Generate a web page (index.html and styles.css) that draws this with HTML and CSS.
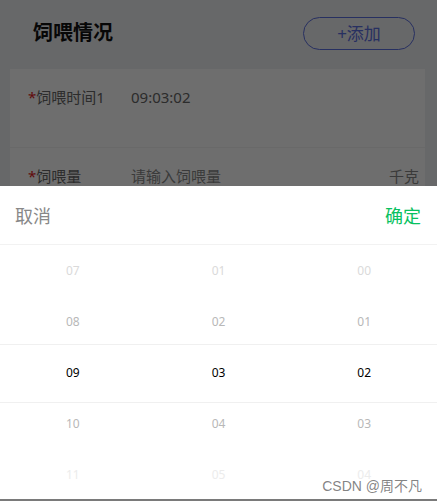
FILE: index.html
```html
<!DOCTYPE html>
<html lang="zh-CN">
<head>
    <meta charset="UTF-8">
    <meta name="viewport" content="width=device-width, initial-scale=1.0">
    <title>饲喂情况</title>
    <link rel="stylesheet" href="styles.css">
</head>
<body>
    <div class="page">
        <div class="section-head">
            <h2 class="section-title">饲喂情况</h2>
            <button class="add-btn">+添加</button>
        </div>

        <div class="feed-card">
            <div class="form-row">
                <span class="form-label"><i class="required">*</i>饲喂时间1</span>
                <span class="form-value">09:03:02</span>
            </div>
            <div class="form-row">
                <span class="form-label"><i class="required">*</i>饲喂量</span>
                <span class="form-value placeholder">请输入饲喂量</span>
                <span class="form-unit">千克</span>
            </div>
        </div>
    </div>

    <!-- time picker popup -->
    <div class="mask"></div>
    <div class="picker">
        <div class="picker-head">
            <span class="picker-cancel">取消</span>
            <span class="picker-confirm">确定</span>
        </div>
        <div class="picker-body">
            <div class="picker-indicator"></div>
            <div class="picker-col">
                <div class="picker-item far">07</div>
                <div class="picker-item near">08</div>
                <div class="picker-item active">09</div>
                <div class="picker-item near">10</div>
                <div class="picker-item farthest">11</div>
            </div>
            <div class="picker-col">
                <div class="picker-item far">01</div>
                <div class="picker-item near">02</div>
                <div class="picker-item active">03</div>
                <div class="picker-item near">04</div>
                <div class="picker-item farthest">05</div>
            </div>
            <div class="picker-col">
                <div class="picker-item far">00</div>
                <div class="picker-item near">01</div>
                <div class="picker-item active">02</div>
                <div class="picker-item near">03</div>
                <div class="picker-item farthest">04</div>
            </div>
        </div>
    </div>

    <div class="watermark">CSDN @周不凡</div>
</body>
</html>
```

FILE: styles.css
```css
* {
    margin: 0;
    padding: 0;
    box-sizing: border-box;
}

body {
    font-family: 'Noto Sans', 'Noto Sans CJK SC', sans-serif;
    width: 437px;
    height: 501px;
    overflow: hidden;
    position: relative;
    background: #eff0f4;
}

.page {
    height: 100%;
}

.section-head {
    display: flex;
    align-items: center;
    justify-content: space-between;
    padding: 16px 22px 0 33px;
}

.section-title {
    font-size: 20px;
    font-weight: bold;
    color: #111;
    line-height: 34px;
}

.add-btn {
    width: 112px;
    height: 33px;
    border: 1px solid #5b6fe0;
    border-radius: 17px;
    background: transparent;
    color: #5b6fe0;
    font-family: inherit;
    font-size: 17px;
    line-height: 31px;
}

.feed-card {
    margin: 19px 12px 0 10px;
    background: #fff;
}

.form-row {
    display: flex;
    align-items: flex-start;
    height: 79px;
    padding: 18px 6px 0 18px;
    font-size: 15px;
    line-height: 21px;
    color: #666;
    border-bottom: 1px solid #f3f3f3;
}

.form-label {
    width: 103px;
    flex-shrink: 0;
}

.required {
    color: #e02020;
    font-style: normal;
}

.form-value {
    flex: 1;
}

.placeholder {
    color: #888;
}

.form-unit {
    color: #888;
}

.mask {
    position: absolute;
    inset: 0;
    background: rgba(0, 0, 0, 0.57);
}

.picker {
    position: absolute;
    left: 0;
    right: 0;
    bottom: 0;
    height: 315px;
    background: #fff;
    border-bottom: 2px solid #7a7a7a;
    display: flex;
    flex-direction: column;
}

.picker-head {
    display: flex;
    justify-content: space-between;
    align-items: center;
    height: 59px;
    padding: 0 16px 0 15px;
    font-size: 18px;
    border-bottom: 1px solid #f2f2f2;
}

.picker-cancel {
    color: #888;
}

.picker-confirm {
    color: #07c160;
}

.picker-body {
    flex: 1;
    display: flex;
    position: relative;
    overflow: hidden;
}

.picker-indicator {
    position: absolute;
    left: 0;
    right: 0;
    top: 99px;
    height: 59px;
    border-top: 1px solid #f0f0f0;
    border-bottom: 1px solid #f0f0f0;
}

.picker-col {
    flex: 1;
    text-align: center;
}

.picker-item {
    height: 51px;
    line-height: 51px;
    font-size: 12px;
    color: #000;
}

.picker-item.far {
    color: #dadada;
}

.picker-item.near {
    color: #b8b8b8;
}

.picker-item.farthest {
    color: #ececec;
}

.watermark {
    position: absolute;
    right: 15px;
    bottom: 6px;
    font-family: 'Liberation Sans', 'Noto Sans CJK SC', sans-serif;
    font-size: 14px;
    color: rgba(110, 110, 110, 0.85);
}
```
